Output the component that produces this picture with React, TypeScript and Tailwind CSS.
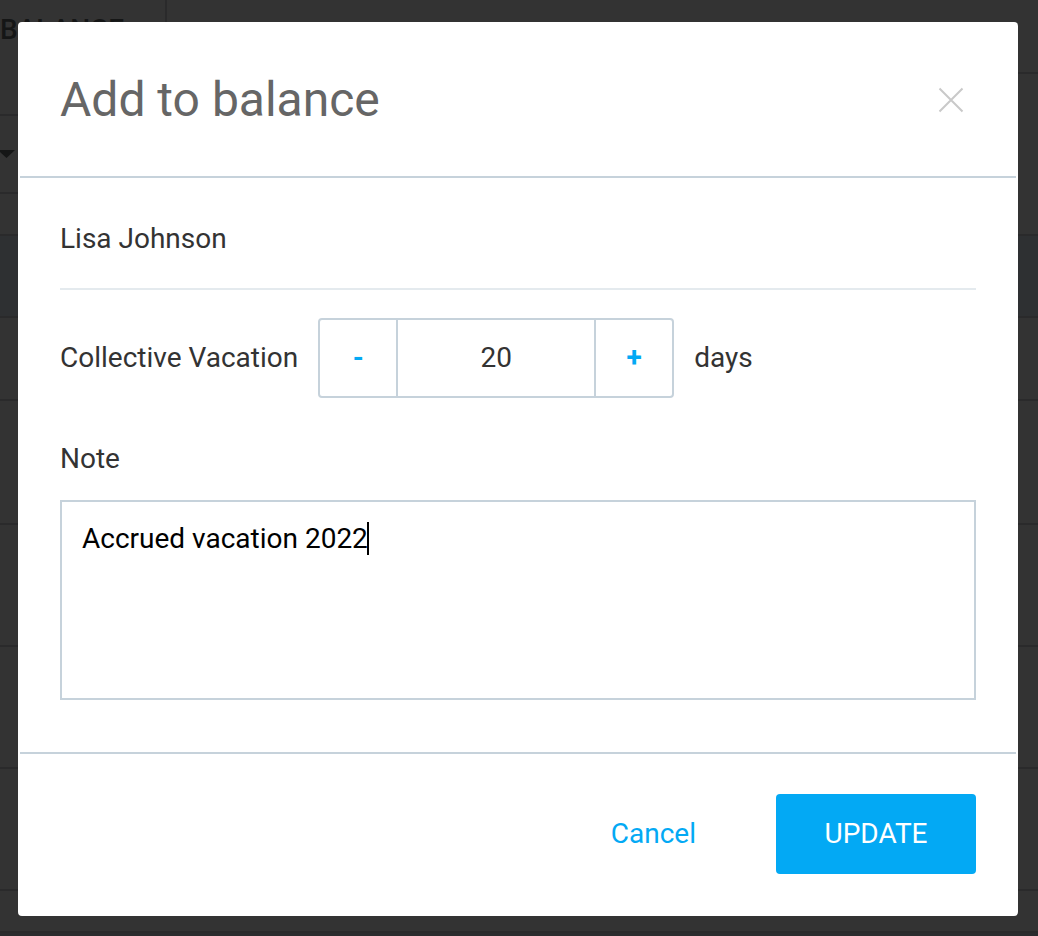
import { useState } from 'react';

const rows = ['h-[84px] bg-[#2e3032]', 'h-[83px]', 'h-[124px]', 'h-[122px]', 'h-[122px]', 'h-[122px]', 'h-[42px]'];

function Backdrop() {
  return (
    <div aria-hidden="true" className="flex min-h-screen flex-col bg-[#333333] text-[#151616]">
      <div className="flex h-[234px]">
        <div className="w-[167px] border-r-2 border-[#2a2a2b]">
          <div className="flex h-[116px] items-start border-b-2 border-[#2a2a2b] pt-4 text-[28px] leading-7 font-medium">
            BALANCE
          </div>
          <div className="flex h-[78px] items-center border-b-2 border-[#2a2a2b]">
            <svg className="h-2 w-[15px]" viewBox="0 0 15 8" fill="currentColor">
              <path d="M-2 0H15L6.5 8Z" />
            </svg>
          </div>
        </div>
        <div className="flex-1">
          <div className="h-[74px] border-b-2 border-[#2a2a2b]" />
        </div>
      </div>
      {rows.map((row, index) => (
        <div
          key={index}
          className={`${row} border-b-2 border-[#2a2a2b] ${index === 0 ? 'border-t-2' : ''}`}
        />
      ))}
      <div className="flex-1 bg-[#2b2c2e]" />
    </div>
  );
}

export default function App() {
  const [days, setDays] = useState('20');
  const [note, setNote] = useState('Accrued vacation 2022');
  const [touched, setTouched] = useState(false);
  const step = (delta: number) => setDays(String((Number(days) || 0) + delta));

  return (
    <div className="relative font-[Roboto,sans-serif]">
      <Backdrop />
      <div className="absolute inset-0 pt-[22px] pr-5 pb-5 pl-[18px]">
        <div
          role="dialog"
          aria-modal="true"
          aria-labelledby="dialog-title"
          className="rounded-[4px] border-2 border-white bg-white text-[28px] leading-[34px] text-[#333333]"
        >
          <header className="flex items-center justify-between border-b-2 border-[#c6d2db] px-10 py-12">
            <h1 id="dialog-title" className="text-[48px] leading-[56px] text-[#666666]">
              Add to balance
            </h1>
            <button type="button" aria-label="Close" className="p-3">
              <svg className="size-[26px]" viewBox="0 0 26 26" fill="none" stroke="#c9c9c9" strokeWidth="2">
                <path d="M1.5 1.5L24.5 24.5M24.5 1.5L1.5 24.5" />
              </svg>
            </button>
          </header>

          <main className="px-10 pt-11 pb-[52px]">
            <p className="border-b-2 border-[#e4eaee] pb-8">Lisa Johnson</p>

            <div className="mt-7 flex items-center gap-5">
              <label htmlFor="days">Collective Vacation</label>
              <div className="flex h-20 w-[356px] rounded-[4px] border-2 border-[#c6d2db]">
                <button
                  type="button"
                  aria-label="Decrease"
                  onClick={() => step(-1)}
                  className="w-[76px] font-bold text-[#03a9f4]"
                >
                  -
                </button>
                <input
                  id="days"
                  value={days}
                  onChange={(event) => setDays(event.target.value)}
                  className="min-w-0 flex-1 border-x-2 border-[#c6d2db] text-center outline-none"
                />
                <button
                  type="button"
                  aria-label="Increase"
                  onClick={() => step(1)}
                  className="w-[76px] font-bold text-[#03a9f4]"
                >
                  +
                </button>
              </div>
              <span>days</span>
            </div>

            <label htmlFor="note" className="mt-11 block">
              Note
            </label>
            <div className="relative mt-6">
              <textarea
                id="note"
                value={note}
                onFocus={() => setTouched(true)}
                onChange={(event) => setNote(event.target.value)}
                className="block h-[200px] w-full resize-none border-2 border-[#c6d2db] p-5 text-black outline-none"
              />
              {!touched && <span className="absolute top-[22px] left-[307px] h-[33px] w-[2px] bg-black" />}
            </div>
          </main>

          <footer className="flex items-center justify-end gap-10 border-t-2 border-[#c6d2db] p-10">
            <button type="button" className="h-20 px-10 text-[#03a9f4]">
              Cancel
            </button>
            <button type="button" className="h-20 w-[200px] rounded-[4px] bg-[#03a9f4] text-white">
              UPDATE
            </button>
          </footer>
        </div>
      </div>
    </div>
  );
}
